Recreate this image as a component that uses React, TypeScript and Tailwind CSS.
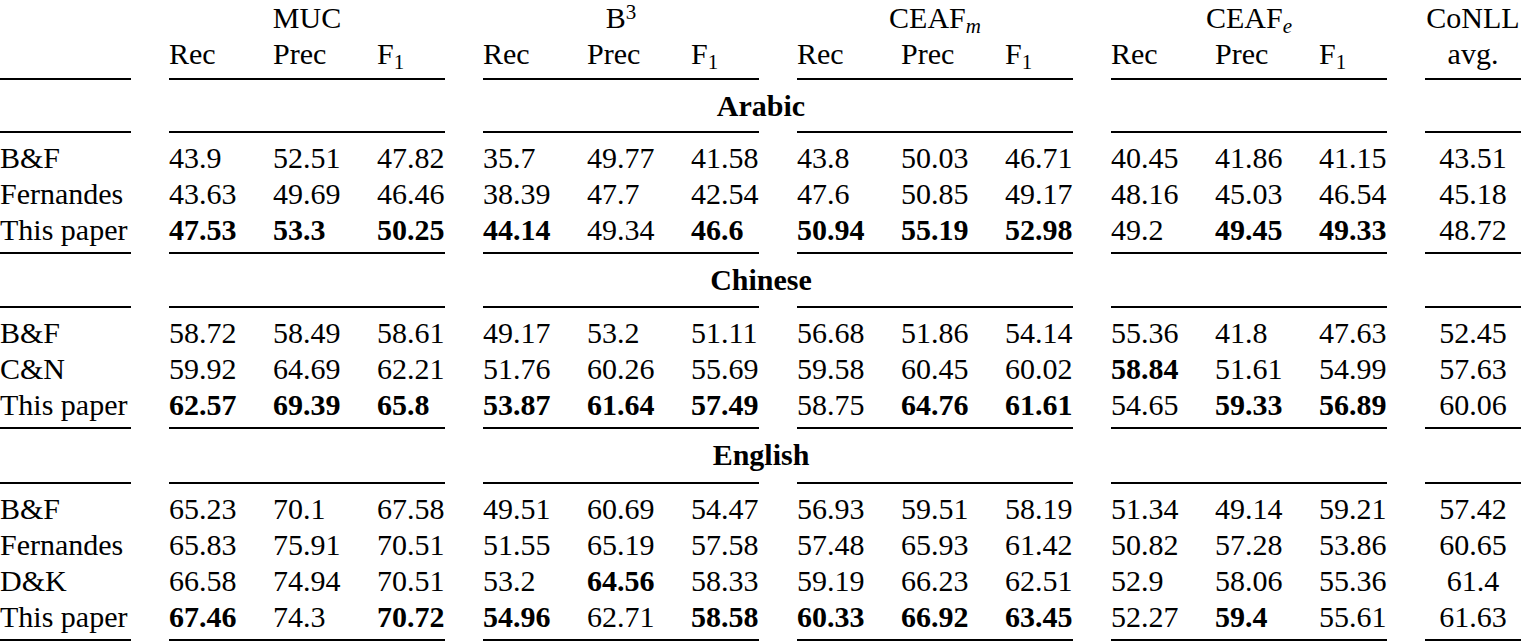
type Cell = { v: string; b?: boolean };

interface DataRow {
  label: string;
  cells: Cell[];
}

// helper: "*" prefix marks a bold value
const parse = (label: string, raw: string): DataRow => ({
  label,
  cells: raw.split(" ").map((s) =>
    s.startsWith("*") ? { v: s.slice(1), b: true } : { v: s }
  ),
});

const sections: { name: string; rows: DataRow[] }[] = [
  {
    name: "Arabic",
    rows: [
      parse("B&F", "43.9 52.51 47.82 35.7 49.77 41.58 43.8 50.03 46.71 40.45 41.86 41.15 43.51"),
      parse("Fernandes", "43.63 49.69 46.46 38.39 47.7 42.54 47.6 50.85 49.17 48.16 45.03 46.54 45.18"),
      parse("This paper", "*47.53 *53.3 *50.25 *44.14 49.34 *46.6 *50.94 *55.19 *52.98 49.2 *49.45 *49.33 48.72"),
    ],
  },
  {
    name: "Chinese",
    rows: [
      parse("B&F", "58.72 58.49 58.61 49.17 53.2 51.11 56.68 51.86 54.14 55.36 41.8 47.63 52.45"),
      parse("C&N", "59.92 64.69 62.21 51.76 60.26 55.69 59.58 60.45 60.02 *58.84 51.61 54.99 57.63"),
      parse("This paper", "*62.57 *69.39 *65.8 *53.87 *61.64 *57.49 58.75 *64.76 *61.61 54.65 *59.33 *56.89 60.06"),
    ],
  },
  {
    name: "English",
    rows: [
      parse("B&F", "65.23 70.1 67.58 49.51 60.69 54.47 56.93 59.51 58.19 51.34 49.14 59.21 57.42"),
      parse("Fernandes", "65.83 75.91 70.51 51.55 65.19 57.58 57.48 65.93 61.42 50.82 57.28 53.86 60.65"),
      parse("D&K", "66.58 74.94 70.51 53.2 *64.56 58.33 59.19 66.23 62.51 52.9 58.06 55.36 61.4"),
      parse("This paper", "*67.46 74.3 *70.72 *54.96 62.71 *58.58 *60.33 *66.92 *63.45 52.27 *59.4 55.61 61.63"),
    ],
  },
];

const Sub = ({ children, italic }: { children: string; italic?: boolean }) => (
  <span className={`relative top-[5px] text-[21px] leading-none ${italic ? "italic" : ""}`}>
    {children}
  </span>
);

const F1 = () => (
  <>
    F<Sub>1</Sub>
  </>
);

const groupTitles = [
  <>MUC</>,
  <>
    B<span className="relative -top-[9px] text-[21px] leading-none">3</span>
  </>,
  <>
    CEAF<Sub italic>m</Sub>
  </>,
  <>
    CEAF<Sub italic>e</Sub>
  </>,
];

const Triple = ({ items }: { items: React.ReactNode[] }) => (
  <div className="flex w-[276px]">
    <div className="w-[104px] whitespace-nowrap">{items[0]}</div>
    <div className="w-[104px] whitespace-nowrap">{items[1]}</div>
    <div className="w-[68px] whitespace-nowrap">{items[2]}</div>
  </div>
);

const Rule = () => (
  <div className="flex h-[2px] items-center gap-[38px]">
    <div className="h-[1.5px] w-[131px] bg-black" />
    <div className="h-[1.5px] w-[276px] bg-black" />
    <div className="h-[1.5px] w-[276px] bg-black" />
    <div className="h-[1.5px] w-[276px] bg-black" />
    <div className="h-[1.5px] w-[276px] bg-black" />
    <div className="h-[1.5px] w-[96px] bg-black" />
  </div>
);

const Row = ({ row }: { row: DataRow }) => {
  const c = row.cells.map((cell, i) => (
    <span key={i} className={cell.b ? "font-bold" : ""}>
      {cell.v}
    </span>
  ));
  return (
    <div className="flex h-[36px] gap-[38px]">
      <div className="w-[131px] whitespace-nowrap">{row.label}</div>
      <Triple items={c.slice(0, 3)} />
      <Triple items={c.slice(3, 6)} />
      <Triple items={c.slice(6, 9)} />
      <Triple items={c.slice(9, 12)} />
      <div className="w-[96px] text-center">{c[12]}</div>
    </div>
  );
};

const colHeads = [<>Rec</>, <>Prec</>, <F1 />];

export default function App() {
  return (
    <div className="h-[642px] w-[1522px] overflow-hidden bg-white font-['Liberation_Serif',serif] text-[30px] leading-[36px] text-black">
      {/* header */}
      <div className="h-[78px]">
        <div className="flex h-[36px] gap-[38px]">
          <div className="w-[131px]" />
          {groupTitles.map((t, i) => (
            <div key={i} className="w-[276px] text-center whitespace-nowrap">
              {t}
            </div>
          ))}
          <div className="w-[96px] text-center">CoNLL</div>
        </div>
        <div className="flex h-[36px] gap-[38px]">
          <div className="w-[131px]" />
          <Triple items={colHeads} />
          <Triple items={colHeads} />
          <Triple items={colHeads} />
          <Triple items={colHeads} />
          <div className="w-[96px] text-center">avg.</div>
        </div>
      </div>
      <Rule />

      {sections.map((s, si) => (
        <div key={s.name}>
          <div className={`pt-[8px] text-center font-bold ${si === 0 ? "h-[51px]" : si === 1 ? "h-[52px]" : "h-[53px]"}`}>
            {s.name}
          </div>
          <Rule />
          <div className="pt-[7px] pb-[4px]">
            {s.rows.map((r, ri) => (
              <Row key={ri} row={r} />
            ))}
          </div>
          <Rule />
        </div>
      ))}
    </div>
  );
}
